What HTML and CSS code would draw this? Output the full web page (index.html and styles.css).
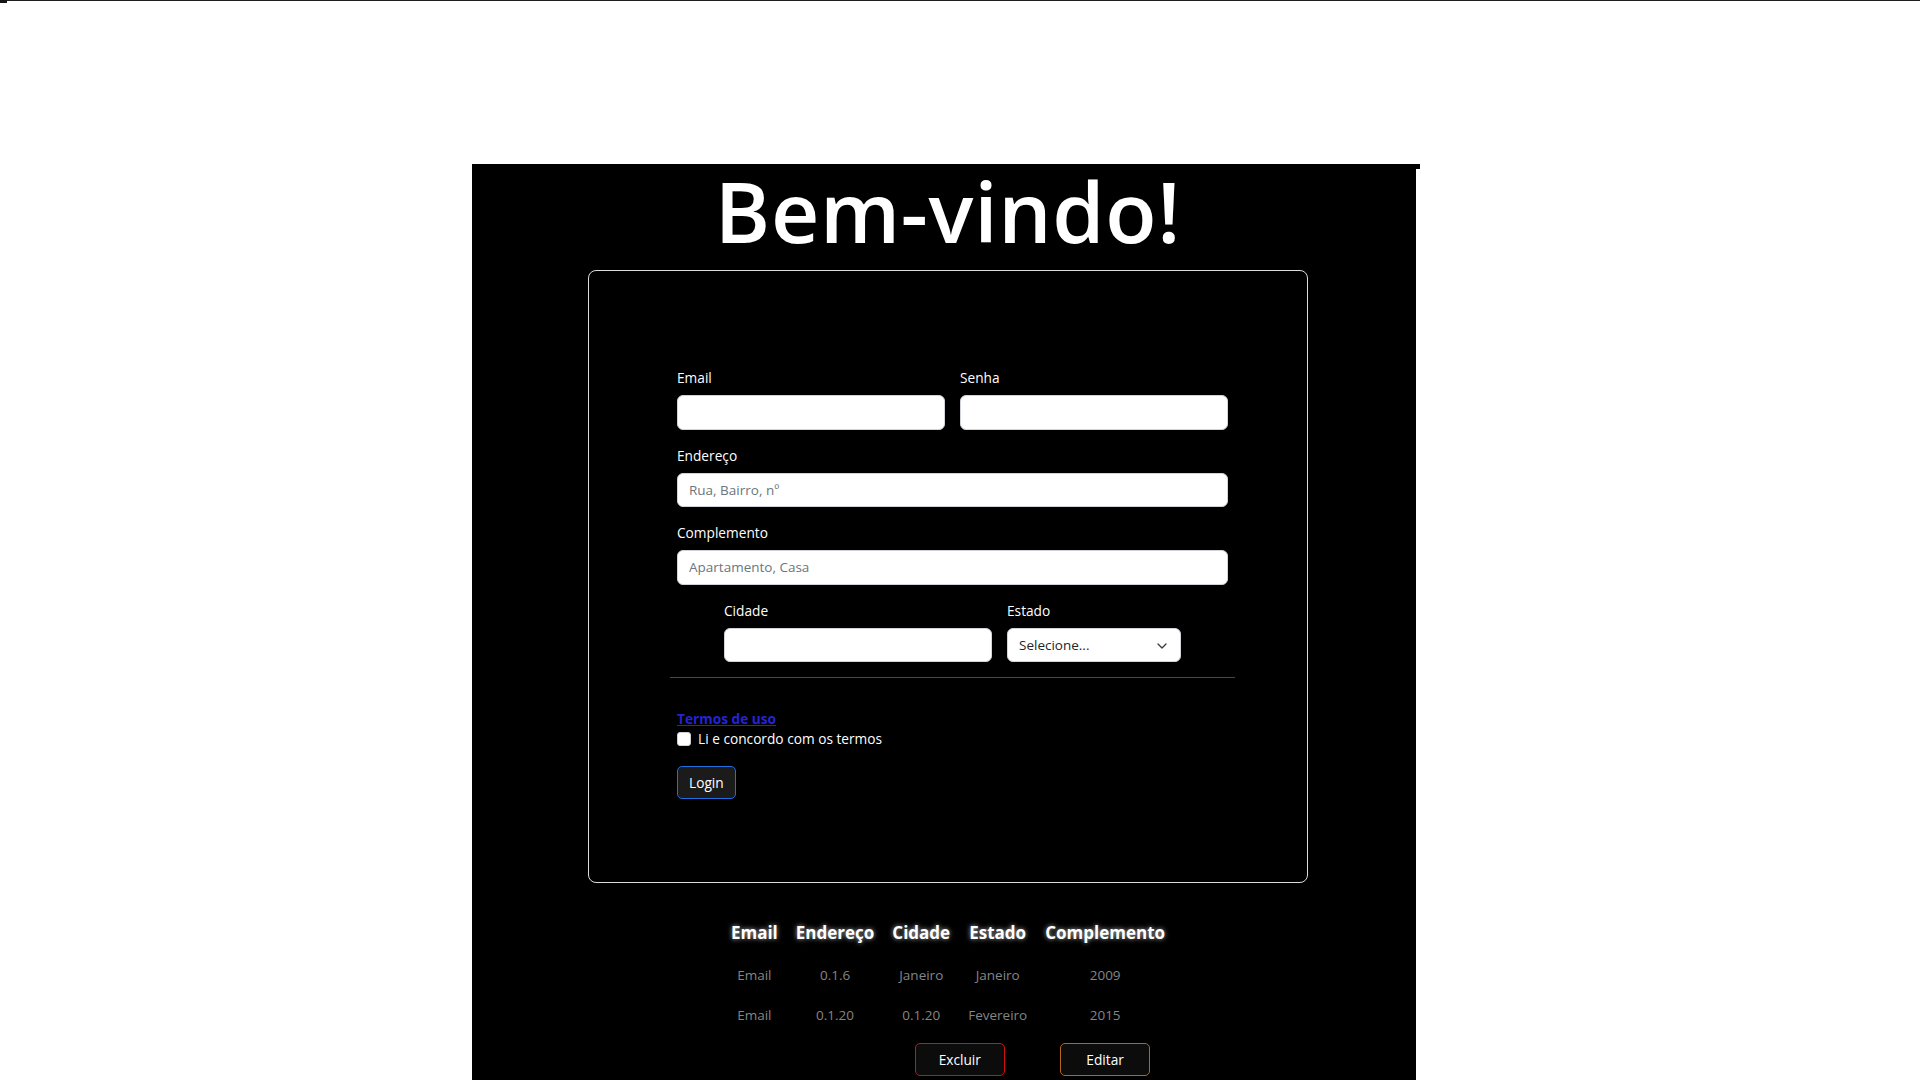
FILE: index.html
```html
<!DOCTYPE html>
<html lang="pt-BR">
<head>
<meta charset="utf-8">
<title>Bem-vindo!</title>
<link rel="stylesheet" href="styles.css">
</head>
<body>
<div class="topline"><span class="topline-mark"></span></div>
<div class="page">
  <div class="page-strip"></div>
  <main class="panel">
    <div class="column">
      <h1 class="title">Bem-vindo!</h1>
      <form class="card">
        <div class="row row-pair">
          <div class="field">
            <label class="field-label" for="email">Email</label>
            <input class="input" id="email" type="email">
          </div>
          <div class="field">
            <label class="field-label" for="senha">Senha</label>
            <input class="input" id="senha" type="password">
          </div>
        </div>
        <div class="field">
          <label class="field-label" for="endereco">Endereço</label>
          <input class="input" id="endereco" type="text" placeholder="Rua, Bairro, nº">
        </div>
        <div class="field">
          <label class="field-label" for="complemento">Complemento</label>
          <input class="input" id="complemento" type="text" placeholder="Apartamento, Casa">
        </div>
        <div class="row row-city">
          <div class="field field-last">
            <label class="field-label" for="cidade">Cidade</label>
            <input class="input" id="cidade" type="text">
          </div>
          <div class="field field-last">
            <label class="field-label" for="estado">Estado</label>
            <div class="select-wrap">
              <select class="select" id="estado">
                <option>Selecione...</option>
              </select>
              <svg class="select-arrow" width="10" height="6" viewBox="0 0 10 6"><path d="M1 1l4 4 4-4" fill="none" stroke="#343a40" stroke-width="1.3" stroke-linecap="round" stroke-linejoin="round"/></svg>
            </div>
          </div>
        </div>
        <hr class="divider">
        <a class="terms" href="#">Termos de uso</a>
        <label class="check">
          <input class="check-box" type="checkbox">
          <span>Li e concordo com os termos</span>
        </label>
        <button class="btn-login" type="button">Login</button>
      </form>
      <table class="data-table">
        <thead>
          <tr>
            <th>Email</th>
            <th>Endereço</th>
            <th>Cidade</th>
            <th>Estado</th>
            <th>Complemento</th>
          </tr>
        </thead>
        <tbody>
          <tr>
            <td>Email</td>
            <td>0.1.6</td>
            <td>Janeiro</td>
            <td>Janeiro</td>
            <td>2009</td>
          </tr>
          <tr>
            <td>Email</td>
            <td>0.1.20</td>
            <td>0.1.20</td>
            <td>Fevereiro</td>
            <td>2015</td>
          </tr>
          <tr class="actions-row">
            <td></td>
            <td></td>
            <td colspan="2"><button class="btn-action btn-delete" type="button">Excluir</button></td>
            <td><button class="btn-action btn-edit" type="button">Editar</button></td>
          </tr>
        </tbody>
      </table>
    </div>
  </main>
</div>
</body>
</html>
```

FILE: styles.css
```css
* {
  box-sizing: border-box;
}

html, body {
  margin: 0;
  padding: 0;
}

body {
  background: #ffffff;
  font-family: "Open Sans", "Noto Sans", Arial, sans-serif;
  color: #ffffff;
}

.topline {
  height: 1px;
  background: #1e1e1e;
}

.topline-mark {
  display: block;
  width: 7px;
  height: 3px;
  background: #161616;
}

.page {
  margin-top: 163px;
  margin-left: 472px;
  width: 948px;
}

.page-strip {
  height: 5px;
  background: #000000;
}

.panel {
  display: block;
  width: 944px;
  background: #000000;
  padding-bottom: 40px;
}

.column {
  margin-left: 116px;
  width: 720px;
}

.title {
  margin: 0 0 17px;
  font-size: 84px;
  line-height: 84px;
  font-weight: 600;
  text-align: center;
  color: #ffffff;
  letter-spacing: 0.7px;
}

.card {
  display: flex;
  flex-direction: column;
  align-items: flex-start;
  border: 1px solid #dcdcdc;
  border-radius: 8px;
  padding: 96px 79px 83px 88px;
}

.card > .field,
.card > .row {
  width: 100%;
}

.row {
  display: grid;
  column-gap: 15px;
}

.row-pair {
  grid-template-columns: 268px 268px;
}

.row-city {
  grid-template-columns: 268px 174px;
  padding-left: 47px;
}

.field {
  display: flex;
  flex-direction: column;
  margin-bottom: 15px;
}

.row .field {
  margin-bottom: 0;
}

.row-pair {
  margin-bottom: 15px;
}

.field-label {
  font-size: 13.7px;
  line-height: 21px;
  margin-bottom: 7px;
  color: #ffffff;
}

.input,
.select {
  width: 100%;
  height: 34.5px;
  border: 1px solid #d0d4d9;
  border-radius: 6px;
  background: #ffffff;
  padding: 0 11px;
  font-family: "Open Sans", "Noto Sans", Arial, sans-serif;
  font-size: 13.5px;
  color: #212529;
  outline: none;
}

.input::placeholder {
  color: #6c757d;
  opacity: 1;
}

.select-wrap {
  position: relative;
}

.select {
  appearance: none;
  -webkit-appearance: none;
  padding-right: 30px;
}

.select-arrow {
  position: absolute;
  right: 14px;
  top: 15px;
  pointer-events: none;
}

.divider {
  align-self: stretch;
  border: 0;
  border-top: 1px solid #484848;
  height: 0;
  margin: 14.5px -7px 0;
}

.terms {
  margin-top: 31px;
  font-size: 13.7px;
  line-height: 20px;
  font-weight: 700;
  color: #2424d6;
  text-decoration: underline;
}

.check {
  display: flex;
  align-items: center;
  font-size: 13.7px;
  line-height: 20px;
  color: #ffffff;
}

.check-box {
  appearance: none;
  -webkit-appearance: none;
  width: 14px;
  height: 14px;
  margin: 0 7px 0 0;
  background: #ffffff;
  border: 1px solid #d0d0d0;
  border-radius: 3px;
}

.btn-login {
  margin-top: 17px;
  height: 33px;
  padding: 0 11px;
  background: #1b1b1b;
  border: 1px solid #1f6fe0;
  border-radius: 5px;
  color: #ffffff;
  font-family: "Open Sans", "Noto Sans", Arial, sans-serif;
  font-size: 13.7px;
}

.data-table {
  margin: 28px auto 0;
  border-collapse: collapse;
}

.data-table th {
  padding: 10px 9px;
  font-size: 17px;
  line-height: 24px;
  font-weight: 700;
  color: #ffffff;
  text-shadow: 0 0 5px rgba(255, 255, 255, 0.7);
  text-align: center;
}

.data-table td {
  padding: 10px 9px;
  font-size: 13.5px;
  line-height: 20.5px;
  color: #858585;
  text-align: center;
}

.data-table .actions-row td {
  padding: 7px 9px 10px;
}

.btn-action {
  width: 90px;
  height: 33px;
  background: #0c0c0c;
  border: 1px solid;
  border-radius: 5px;
  color: #ffffff;
  font-family: "Open Sans", "Noto Sans", Arial, sans-serif;
  font-size: 13.7px;
}

.btn-delete {
  border-color: #d40f0f;
}

.btn-edit {
  border-color: #b4651c;
}
```
